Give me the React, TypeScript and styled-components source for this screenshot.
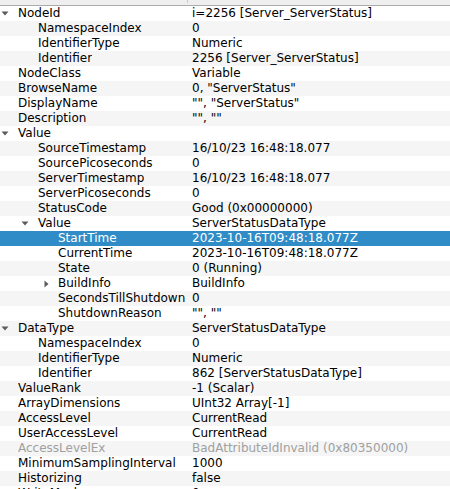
import styled, { createGlobalStyle } from 'styled-components'

type Attr = {
  name: string
  value: string
  depth: number
  expand?: 'open' | 'closed'
  dim?: boolean
  selected?: boolean
}

const rows: Attr[] = [
  { name: 'NodeId', value: 'i=2256 [Server_ServerStatus]', depth: 0, expand: 'open' },
  { name: 'NamespaceIndex', value: '0', depth: 1 },
  { name: 'IdentifierType', value: 'Numeric', depth: 1 },
  { name: 'Identifier', value: '2256 [Server_ServerStatus]', depth: 1 },
  { name: 'NodeClass', value: 'Variable', depth: 0 },
  { name: 'BrowseName', value: '0, "ServerStatus"', depth: 0 },
  { name: 'DisplayName', value: '"", "ServerStatus"', depth: 0 },
  { name: 'Description', value: '"", ""', depth: 0 },
  { name: 'Value', value: '', depth: 0, expand: 'open' },
  { name: 'SourceTimestamp', value: '16/10/23 16:48:18.077', depth: 1 },
  { name: 'SourcePicoseconds', value: '0', depth: 1 },
  { name: 'ServerTimestamp', value: '16/10/23 16:48:18.077', depth: 1 },
  { name: 'ServerPicoseconds', value: '0', depth: 1 },
  { name: 'StatusCode', value: 'Good (0x00000000)', depth: 1 },
  { name: 'Value', value: 'ServerStatusDataType', depth: 1, expand: 'open' },
  { name: 'StartTime', value: '2023-10-16T09:48:18.077Z', depth: 2, selected: true },
  { name: 'CurrentTime', value: '2023-10-16T09:48:18.077Z', depth: 2 },
  { name: 'State', value: '0 (Running)', depth: 2 },
  { name: 'BuildInfo', value: 'BuildInfo', depth: 2, expand: 'closed' },
  { name: 'SecondsTillShutdown', value: '0', depth: 2 },
  { name: 'ShutdownReason', value: '"", ""', depth: 2 },
  { name: 'DataType', value: 'ServerStatusDataType', depth: 0, expand: 'open' },
  { name: 'NamespaceIndex', value: '0', depth: 1 },
  { name: 'IdentifierType', value: 'Numeric', depth: 1 },
  { name: 'Identifier', value: '862 [ServerStatusDataType]', depth: 1 },
  { name: 'ValueRank', value: '-1 (Scalar)', depth: 0 },
  { name: 'ArrayDimensions', value: 'UInt32 Array[-1]', depth: 0 },
  { name: 'AccessLevel', value: 'CurrentRead', depth: 0 },
  { name: 'UserAccessLevel', value: 'CurrentRead', depth: 0 },
  { name: 'AccessLevelEx', value: 'BadAttributeIdInvalid (0x80350000)', depth: 0, dim: true },
  { name: 'MinimumSamplingInterval', value: '1000', depth: 0 },
  { name: 'Historizing', value: 'false', depth: 0 },
  { name: 'WriteMask', value: '0', depth: 0 },
]

export default function App() {
  return (
    <>
      <GlobalStyle />
      <Tree>
        <Header>
          <HeaderCell $first>Attribute</HeaderCell>
          <HeaderCell>Value</HeaderCell>
        </Header>
        {rows.map((row, i) => (
          <Row key={i} $odd={i % 2 === 1} $selected={!!row.selected} $dim={!!row.dim}>
            <NameCell $depth={row.depth}>
              <Expander>
                {row.expand === 'open' && (
                  <svg width="8" height="5" viewBox="0 0 8 5">
                    <path d="M0.5 0.5 L7.5 0.5 L4 4.5 Z" fill="#5c5c5c" />
                  </svg>
                )}
                {row.expand === 'closed' && (
                  <svg width="5" height="8" viewBox="0 0 5 8">
                    <path d="M0.5 0.5 L4.5 4 L0.5 7.5 Z" fill={row.selected ? '#fff' : '#5c5c5c'} />
                  </svg>
                )}
              </Expander>
              <Label>{row.name}</Label>
            </NameCell>
            <ValueCell>{row.value}</ValueCell>
          </Row>
        ))}
      </Tree>
    </>
  )
}

const GlobalStyle = createGlobalStyle`
  html, body {
    margin: 0;
    padding: 0;
    background: #ffffff;
    overflow: hidden;
  }
  body {
    font-family: "DejaVu Sans", "Liberation Sans", sans-serif;
    font-size: 12px;
  }
`

const Tree = styled.div`
  width: 450px;
  height: 489px;
  overflow: hidden;
  background: #ffffff;
`

const Header = styled.div`
  display: flex;
  height: 5px;
  overflow: hidden;
  background: #efefef;
  border-bottom: 1px solid #ababab;
  align-items: flex-end;
`

const HeaderCell = styled.div<{ $first?: boolean }>`
  width: ${(p) => (p.$first ? '188px' : 'auto')};
  flex: ${(p) => (p.$first ? 'none' : '1')};
  box-sizing: border-box;
  padding-left: 4px;
  line-height: 15px;
  margin-bottom: 2px;
  color: #000;
  border-right: ${(p) => (p.$first ? '1px solid #c8c8c8' : 'none')};
`

const Row = styled.div<{ $odd: boolean; $selected: boolean; $dim: boolean }>`
  display: flex;
  height: 15px;
  line-height: 15px;
  white-space: nowrap;
  background: ${(p) => (p.$selected ? '#308cc6' : p.$odd ? '#f5f5f5' : '#ffffff')};
  color: ${(p) => (p.$selected ? '#ffffff' : p.$dim ? '#a0a0a0' : '#000000')};
`

const NameCell = styled.div<{ $depth: number }>`
  width: 188px;
  flex: none;
  display: flex;
  align-items: center;
  box-sizing: border-box;
  padding-left: ${(p) => p.$depth * 20}px;
  overflow: hidden;
`

const Expander = styled.span`
  width: 18px;
  flex: none;
  display: flex;
  align-items: center;
  padding-left: 1px;
  box-sizing: border-box;
  svg {
    display: block;
  }
  svg[width='5'] {
    margin-left: 3px;
  }
`

const Label = styled.span`
  overflow: hidden;
`

const ValueCell = styled.div`
  flex: 1;
  padding-left: 4px;
  overflow: hidden;
`
